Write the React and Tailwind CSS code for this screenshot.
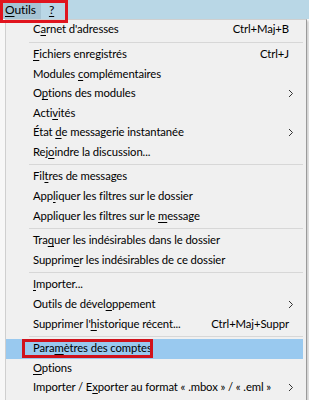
const U = ({ children }) => <span className="underline underline-offset-2">{children}</span>;

const Sep = () => <div className="h-px bg-[#d7d7d7] ml-[23px] mr-[3px] my-[2px]" />;

const Arrow = () => (
  <svg width="6" height="9" viewBox="0 0 6 9" className="text-[#333]">
    <path d="M1 1l3.5 3.5L1 8" fill="none" stroke="currentColor" strokeWidth="1" />
  </svg>
);

const Item = ({ children, shortcut, sub, active }) => (
  <div
    className={`flex items-center h-[19.6px] pl-[27px] pr-[12px] ${
      active ? "bg-[#99c9ef] mr-[3px] pr-[9px]" : ""
    }`}
  >
    <span className="flex-1 whitespace-nowrap">{children}</span>
    {shortcut && <span className="whitespace-nowrap mr-[5px]">{shortcut}</span>}
    {sub && <Arrow />}
  </div>
);

export default function App() {
  return (
    <div
      className="relative w-[309px] h-[400px] overflow-hidden bg-[#f7f7f7] text-[11.3px] tracking-[-0.1px] text-black"
      style={{ fontFamily: 'Lato, "Noto Sans", sans-serif' }}
    >
      <div className="flex items-center h-[19px] bg-[#b9d7e6] text-[12px]">
        <div className="flex items-center h-full bg-[#a6c4d4] pl-[5px] pr-[5px]">
          <U>O</U>utils
        </div>
        <div className="pl-[8px]">
          <U>?</U>
        </div>
      </div>

      <div className="ml-[5px] w-[302px] border border-[#cfcfcf] border-r-[#9a9a9a] border-b-[#9a9a9a] bg-[#f0f0f0] pb-[2px] shadow-[2px_2px_2px_rgba(0,0,0,0.15)]">
        <Item shortcut="Ctrl+Maj+B">C<U>a</U>rnet d'adresses</Item>
        <Sep />
        <Item shortcut="Ctrl+J"><U>F</U>ichiers enregistrés</Item>
        <Item>Modules <U>c</U>omplémentaires</Item>
        <Item sub>O<U>p</U>tions des modules</Item>
        <Item>Acti<U>v</U>ités</Item>
        <Item sub>État <U>d</U>e messagerie instantanée</Item>
        <Item>Rej<U>o</U>indre la discussion...</Item>
        <Sep />
        <Item>Fil<U>t</U>res de messages</Item>
        <Item>App<U>l</U>iquer les filtres sur le dossier</Item>
        <Item>Appliquer les filtres sur le <U>m</U>essage</Item>
        <Sep />
        <Item>Tra<U>q</U>uer les indésirables dans le dossier</Item>
        <Item>Supprim<U>e</U>r les indésirables de ce dossier</Item>
        <Sep />
        <Item><U>I</U>mporter...</Item>
        <Item sub>Outils de dével<U>o</U>ppement</Item>
        <Item shortcut="Ctrl+Maj+Suppr">Supprimer l'<U>h</U>istorique récent...</Item>
        <Sep />
        <Item active>Para<U>m</U>ètres des comptes</Item>
        <Item><U>O</U>ptions</Item>
        <Item sub>Importer / E<U>x</U>porter au format « .mbox » / « .eml »</Item>
      </div>

      <div className="absolute left-0 top-0 w-[68px] h-[23px] border-[3px] border-[#e0141e]" />
      <div className="absolute left-[22px] top-[339px] w-[131px] h-[19px] border-[3px] border-[#d0121c]" />
    </div>
  );
}
